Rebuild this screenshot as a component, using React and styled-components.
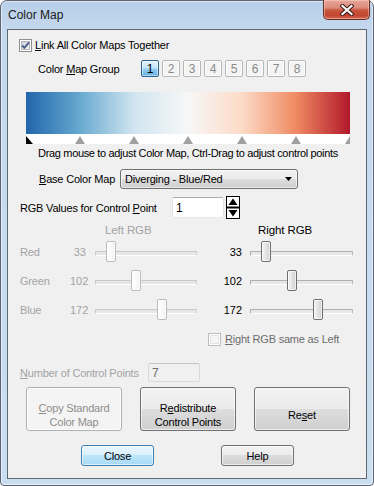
import React from 'react';
import styled, { createGlobalStyle } from 'styled-components';

const GlobalStyle = createGlobalStyle`
  html, body { margin: 0; padding: 0; background: #fff; }
  body {
    font-family: "Liberation Sans", Arial, sans-serif;
    font-size: 11px;
    letter-spacing: -0.2px;
    color: #000;
  }
  * { box-sizing: border-box; }
`;

const STOPS = ['#2166ac', '#67a9cf', '#d1e5f0', '#f7f7f7', '#fddbc7', '#ef8a62', '#b2182b'];
const CHANNELS = [
  { name: 'Red', value: 33 },
  { name: 'Green', value: 102 },
  { name: 'Blue', value: 172 },
];
const GRAY = '#a3a3a3';

const Frame = styled.div`
  width: 374px;
  height: 486px;
  display: flex;
  flex-direction: column;
  padding: 0 6px 6px;
  border: 1px solid #5b6470;
  border-radius: 7px 7px 4px 4px;
  background: linear-gradient(to bottom, #b7cfe9 0px, #c4d8ee 28px, #cadef2 100%);
  box-shadow: inset 0 0 0 1px rgba(255, 255, 255, 0.55);
`;

const TitleBar = styled.div`
  height: 28px;
  display: flex;
  align-items: flex-start;
`;

const Title = styled.div`
  margin: 7px 0 0 1px;
  font-size: 12px;
  letter-spacing: 0;
  color: #1a1a1a;
`;

const CaptionClose = styled.div`
  margin: -1px -3px 0 auto;
  width: 47px;
  height: 20px;
  display: flex;
  align-items: center;
  justify-content: center;
  border: 1px solid #6b2c22;
  border-top: none;
  border-radius: 0 0 5px 5px;
  background: linear-gradient(to bottom, #e7a79a 0%, #db8a7a 42%, #c9573f 52%, #c2452f 82%, #d4705b 100%);
  box-shadow: inset 0 0 0 1px rgba(255, 220, 210, 0.45);
`;

const Client = styled.div`
  height: 450px;
  display: flex;
  flex-direction: column;
  border: 1px solid #5f6771;
  background: #f0f0f0;
`;

const U = styled.span`
  text-decoration: underline;
  text-underline-offset: 1px;
`;

const CheckRow = styled.div`
  display: flex;
  align-items: center;
  gap: ${p => p.$gap}px;
  height: 13px;
  margin-top: ${p => p.$top}px;
  padding-left: ${p => p.$left}px;
  color: ${p => (p.$disabled ? '#6d6d6d' : '#000')};
  line-height: 13px;
`;

const GroupRow = styled.div`
  display: flex;
  align-items: center;
  height: 17px;
  margin-top: 8px;
  padding-left: 30px;
`;

const Label = styled.div`
  width: ${p => p.$width}px;
  flex: none;
  color: ${p => (p.$disabled ? GRAY : '#000')};
`;

const GroupButtons = styled.div`
  display: flex;
  gap: 3px;
`;

const GroupBtn = styled.div`
  width: 18px;
  height: 17px;
  display: flex;
  align-items: center;
  justify-content: center;
  font-size: 12px;
  letter-spacing: 0;
  border-radius: 2px;
  border: 1px solid ${p => (p.$active ? '#2c628b' : '#b5b8bb')};
  color: ${p => (p.$active ? '#000' : '#8a8a8a')};
  background: ${p =>
    p.$active
      ? 'linear-gradient(to bottom, #e2f3fd 0%, #c6e6f9 45%, #93cdef 55%, #62afe0 100%)'
      : '#f4f4f4'};
  box-shadow: inset 0 0 0 1px ${p => (p.$active ? 'rgba(255,255,255,.5)' : '#fcfcfc')};
`;

const Bar = styled.div`
  width: 324px;
  margin: 15px 0 0 18px;
`;

const Ramp = styled.div`
  height: 42px;
  background: linear-gradient(to right, ${STOPS.join(', ')});
`;

const Strip = styled.div`
  position: relative;
  height: 10px;
  background: #fff;
  overflow: hidden;
`;

const Marker = styled.div`
  position: absolute;
  bottom: 0;
  width: 0;
  height: 0;
  border-left: ${p => (p.$active ? 7 : 5)}px solid transparent;
  border-right: ${p => (p.$active ? 7 : 5)}px solid transparent;
  border-bottom: 8px solid ${p => (p.$active ? '#000' : '#a0a0a0')};
  transform: translateX(-50%);
`;

const Hint = styled.div`
  margin-top: 3px;
  line-height: 13px;
  text-align: center;
  letter-spacing: -0.34px;
  padding-left: 2px;
`;

const FieldRow = styled.div`
  display: flex;
  align-items: center;
  height: ${p => p.$height}px;
  margin-top: ${p => p.$top}px;
  padding-left: ${p => p.$left}px;
`;

const Select = styled.div`
  width: 178px;
  height: 20px;
  display: flex;
  align-items: center;
  justify-content: space-between;
  padding: 0 5px 0 4px;
  border: 1px solid #707070;
  border-radius: 3px;
  background: linear-gradient(to bottom, #f2f2f2 0%, #ebebeb 50%, #dddddd 50%, #cfcfcf 100%);
  box-shadow: inset 0 0 0 1px rgba(255, 255, 255, 0.6);
`;

const TextBox = styled.div`
  width: 52px;
  height: ${p => p.$height}px;
  display: flex;
  align-items: center;
  padding-left: 3px;
  border: 1px solid;
  border-color: ${p => (p.$disabled ? '#c3c4c8 #d6d7db #dadbdf' : '#abadb3 #e2e3ea #e3e9ef')};
  border-radius: 2px;
  background: ${p => (p.$disabled ? '#f0f0f0' : '#fff')};
  color: ${p => (p.$disabled ? '#6d6d6d' : '#000')};
  font-size: 12px;
`;

const Spin = styled.svg`
  margin-left: 2px;
  flex: none;
`;

const SliderGrid = styled.div`
  display: grid;
  grid-template-columns: 50px 25px 102px 53px 103px;
  align-items: center;
  height: ${p => p.$height}px;
  padding-left: 12px;
`;

const Heading = styled.div`
  grid-column: ${p => p.$col};
  padding-left: ${p => p.$pad}px;
  line-height: 13px;
  font-size: 11.5px;
  letter-spacing: -0.1px;
  color: ${p => (p.$disabled ? GRAY : '#000')};
`;

const Headings = styled(SliderGrid)`
  margin-top: 5px;
`;

const SliderRows = styled.div`
  display: flex;
  flex-direction: column;
  gap: 7px;
  margin-top: 4px;
`;

const Value = styled.div`
  text-align: right;
  padding-right: ${p => p.$pad}px;
  letter-spacing: 0;
  color: ${p => (p.$disabled ? GRAY : '#000')};
`;

const Track = styled.div`
  position: relative;
  height: 22px;
  &::before {
    content: '';
    position: absolute;
    left: 0;
    right: 0;
    top: 10px;
    height: 3px;
    border: 1px solid;
    border-color: ${p => (p.$disabled ? '#c9c9c9 #d4d4d4 #ffffff #c9c9c9' : '#b0b0b0 #bcbcbc #ffffff #b0b0b0')};
    background: #e7e7e7;
  }
`;

const Thumb = styled.div`
  position: absolute;
  top: 0;
  width: 10px;
  height: 21px;
  border: 1px solid ${p => (p.$disabled ? '#b9bcbf' : '#6f6f6f')};
  border-radius: 2px;
  background: ${p =>
    p.$disabled
      ? 'linear-gradient(to right, #ffffff, #f3f3f3)'
      : 'linear-gradient(to right, #f4f4f4 0%, #e3e3e3 50%, #cfcfcf 100%)'};
  box-shadow: inset 0 0 0 1px rgba(255, 255, 255, 0.7);
`;

const ButtonRow = styled.div`
  display: flex;
  gap: ${p => p.$gap}px;
  margin-top: ${p => p.$top}px;
  padding-left: ${p => p.$left}px;
`;

const Button = styled.div`
  width: ${p => p.$width}px;
  height: ${p => p.$height}px;
  display: flex;
  align-items: center;
  justify-content: center;
  padding-top: ${p => p.$padTop || 0}px;
  text-align: center;
  line-height: 14px;
  border-radius: 3px;
  border: 1px solid ${p => (p.$disabled ? '#adb2b5' : p.$default ? '#3c7fb1' : '#707070')};
  color: ${p => (p.$disabled ? '#8d8d8d' : '#000')};
  background: ${p =>
    p.$disabled
      ? '#f4f4f4'
      : p.$default
      ? 'linear-gradient(to bottom, #eaf6fd 0%, #d9f0fc 50%, #bee6fd 50%, #a7d9f5 100%)'
      : 'linear-gradient(to bottom, #f2f2f2 0%, #ebebeb 50%, #dddddd 50%, #cfcfcf 100%)'};
  box-shadow: inset 0 0 0 1px ${p => (p.$disabled ? '#fcfcfc' : 'rgba(255,255,255,.6)')};
`;

const CheckBox = ({ checked, disabled }) => (
  <svg width="13" height="13" viewBox="0 0 13 13" style={{ flex: 'none' }}>
    <defs>
      <linearGradient id={disabled ? 'cbd' : 'cbe'} x1="0" y1="0" x2="1" y2="1">
        <stop offset="0" stopColor={disabled ? '#f4f4f4' : '#cbcfd5'} />
        <stop offset="1" stopColor={disabled ? '#f7f7f7' : '#f6f6f6'} />
      </linearGradient>
    </defs>
    <rect x="0.5" y="0.5" width="12" height="12" fill="#fff" stroke={disabled ? '#bcbcbc' : '#8e8f8f'} />
    <rect x="2.5" y="2.5" width="8" height="8" fill={`url(#${disabled ? 'cbd' : 'cbe'})`} stroke={disabled ? '#e3e3e3' : '#b5b8bd'} />
    {checked && (
      <path d="M3 6.3 L5.4 8.9 L10 3.4" fill="none" stroke="#4a5f8e" strokeWidth="1.9" strokeLinejoin="round" />
    )}
  </svg>
);

const Slider = ({ value, width, disabled }) => (
  <Track $disabled={disabled}>
    <Thumb $disabled={disabled} style={{ left: Math.round(3.5 + (value * (width - 8)) / 255 - 5) }} />
  </Track>
);

export default function App() {
  return (
    <>
      <GlobalStyle />
      <Frame>
        <TitleBar>
          <Title>Color Map</Title>
          <CaptionClose>
            <svg width="14" height="12" viewBox="0 0 14 12">
              <path d="M2.5 2 L11.5 10 M11.5 2 L2.5 10" stroke="#3b1a14" strokeWidth="4.2" strokeLinecap="square" />
              <path d="M2.5 2 L11.5 10 M11.5 2 L2.5 10" stroke="#ffffff" strokeWidth="2.2" strokeLinecap="square" />
            </svg>
          </CaptionClose>
        </TitleBar>

        <Client>
          <CheckRow $top={9} $left={11} $gap={3}>
            <CheckBox checked />
            <span><U>L</U>ink All Color Maps Together</span>
          </CheckRow>

          <GroupRow>
            <Label $width={103}>Color <U>M</U>ap Group</Label>
            <GroupButtons>
              {[1, 2, 3, 4, 5, 6, 7, 8].map(n => (
                <GroupBtn key={n} $active={n === 1}>{n}</GroupBtn>
              ))}
            </GroupButtons>
          </GroupRow>

          <Bar>
            <Ramp />
            <Strip>
              {STOPS.map((c, i) => (
                <Marker key={c} $active={i === 0} style={{ left: `${(i / (STOPS.length - 1)) * 100}%` }} />
              ))}
            </Strip>
          </Bar>

          <Hint>Drag mouse to adjust Color Map, Ctrl-Drag to adjust control points</Hint>

          <FieldRow $top={9} $left={31} $height={20}>
            <Label $width={81}><U>B</U>ase Color Map</Label>
            <Select>
              <span>Diverging - Blue/Red</span>
              <svg width="7" height="4" viewBox="0 0 7 4">
                <path d="M0 0 H7 L3.5 4 Z" fill="#000" />
              </svg>
            </Select>
          </FieldRow>

          <FieldRow $top={7} $left={12} $height={23}>
            <Label $width={152}>RGB Values for Control <U>P</U>oint</Label>
            <TextBox $height={21}>1</TextBox>
            <Spin width="14" height="23" viewBox="0 0 14 23">
              <rect x="0.5" y="0.5" width="13" height="22" fill="#fff" stroke="#000" />
              <path d="M7 2.5 L11.5 9 L2.5 9 Z" fill="#000" />
              <rect x="1" y="10.5" width="12" height="2" fill="#000" />
              <path d="M2.5 14 L11.5 14 L7 20.5 Z" fill="#000" />
            </Spin>
          </FieldRow>

          <Headings $height={13}>
            <Heading $col={3} $pad={10} $disabled>Left RGB</Heading>
            <Heading $col={5} $pad={8}>Right RGB</Heading>
          </Headings>

          <SliderRows>
            {CHANNELS.map(ch => (
              <SliderGrid key={ch.name} $height={22}>
                <Label $width={50} $disabled>{ch.name}</Label>
                <Value $pad={9} $disabled>{ch.value}</Value>
                <Slider value={ch.value} width={102} disabled />
                <Value $pad={8}>{ch.value}</Value>
                <Slider value={ch.value} width={103} />
              </SliderGrid>
            ))}
          </SliderRows>

          <CheckRow $top={12} $left={200} $gap={4} $disabled>
            <CheckBox disabled />
            <span><U>R</U>ight RGB same as Left</span>
          </CheckRow>

          <FieldRow $top={17} $left={12} $height={19}>
            <Label $width={128} $disabled><U>N</U>umber of Control Points</Label>
            <TextBox $height={19} $disabled>7</TextBox>
          </FieldRow>

          <ButtonRow $top={5} $left={18} $gap={18}>
            <Button $width={96} $height={44} $padTop={12} $disabled>
              <span><U>C</U>opy Standard<br />Color Map</span>
            </Button>
            <Button $width={96} $height={44} $padTop={12}>
              <span>R<U>e</U>distribute<br />Control Points</span>
            </Button>
            <Button $width={96} $height={44} $padTop={12}>
              <span>Re<U>s</U>et</span>
            </Button>
          </ButtonRow>

          <ButtonRow $top={14} $left={73} $gap={67}>
            <Button $width={73} $height={21} $default>Close</Button>
            <Button $width={73} $height={21}>Help</Button>
          </ButtonRow>
        </Client>
      </Frame>
    </>
  );
}
